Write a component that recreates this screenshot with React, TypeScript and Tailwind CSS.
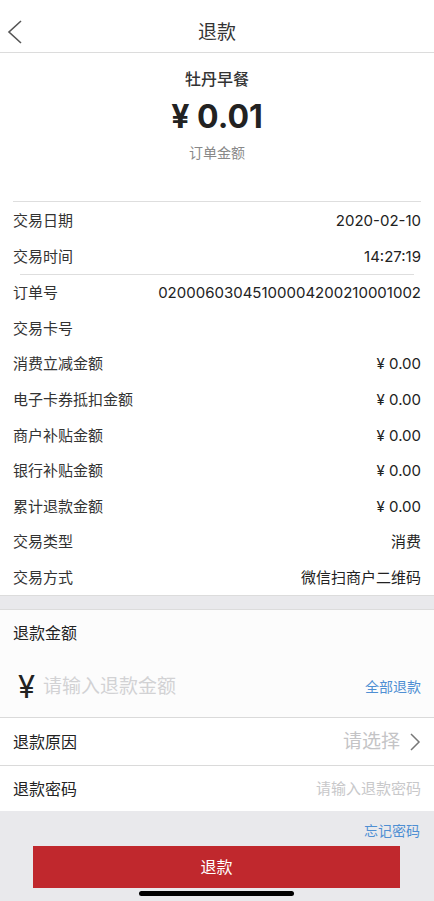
import React from "react";

const font = { fontFamily: 'Inter, "Noto Sans CJK SC", sans-serif' };

function Row({ label, value, h = "h-[35.6px]" }: { label: string; value?: string; h?: string }) {
  return (
    <div className={`flex items-center justify-between px-[13px] ${h} text-[15px] leading-none`}>
      <span className="text-[#333]">{label}</span>
      <span className="text-[#222]">{value ?? ""}</span>
    </div>
  );
}

export default function App() {
  return (
    <div className="relative w-[434px] h-[901px] bg-[#e9e9ec] overflow-hidden" style={font}>
      {/* header */}
      <div className="relative h-[53px] bg-white border-b border-[#dcdcdc] flex items-center justify-center">
        <svg className="absolute left-[6px] top-[18px]" width="20" height="28" viewBox="0 0 20 28">
          <polyline points="15,3 3,14 15,25" fill="none" stroke="#555" strokeWidth="1.6" />
        </svg>
        <span className="text-[19px] text-[#333] mt-[14px]">退款</span>
      </div>

      <div className="bg-white">
        {/* summary */}
        <div className="flex flex-col items-center pt-[14px] pb-[38px]">
          <div className="h-[24px] leading-[24px] text-[16px] text-[#333] font-medium">牡丹早餐</div>
          <div className="mt-[6px] h-[40px] leading-[40px] text-[32px] font-bold text-[#222]">¥ 0.01</div>
          <div className="mt-[6px] h-[20px] leading-[20px] text-[14px] text-[#888]">订单金额</div>
        </div>
        <div className="mx-[13px] h-px bg-[#dedede]" />

        <Row label="交易日期" value="2020-02-10" h="h-[36px]" />
        <Row label="交易时间" value="14:27:19" h="h-[36px]" />
        <div className="mx-[20px] h-px bg-[#dedede]" />
        <Row label="订单号" value="02000603045100004200210001002" />
        <Row label="交易卡号" />
        <Row label="消费立减金额" value="¥ 0.00" />
        <Row label="电子卡券抵扣金额" value="¥ 0.00" />
        <Row label="商户补贴金额" value="¥ 0.00" />
        <Row label="银行补贴金额" value="¥ 0.00" />
        <Row label="累计退款金额" value="¥ 0.00" />
        <Row label="交易类型" value="消费" />
        <Row label="交易方式" value="微信扫商户二维码" />
      </div>

      <div className="h-[15px] border-t border-[#dcdcdc] border-b bg-[#e9e9ec]" />

      <div className="bg-[#fcfcfc]">
        <div className="h-[46px] flex items-center px-[13px] text-[16px] text-[#222]">退款金额</div>
        <div className="h-[61px] flex items-center px-[13px]">
          <span className="text-[31px] text-[#222] leading-none ml-[5px]">¥</span>
          <span className="ml-[8px] text-[19px] text-[#d2d2d4]">请输入退款金额</span>
          <span className="ml-auto text-[14px] text-[#4f8fd3]">全部退款</span>
        </div>
      </div>
      <div className="h-px bg-[#dadada]" />
      <div className="bg-white h-[47px] flex items-center px-[13px]">
        <span className="text-[16px] text-[#222]">退款原因</span>
        <span className="ml-auto text-[19px] text-[#c4c4c6]">请选择</span>
        <svg className="ml-[9px]" width="12" height="20" viewBox="0 0 12 20">
          <polyline points="2,2 10,10 2,18" fill="none" stroke="#777" strokeWidth="1.5" />
        </svg>
      </div>
      <div className="h-px bg-[#dadada]" />
      <div className="bg-white h-[45px] flex items-center px-[13px]">
        <span className="text-[16px] text-[#222]">退款密码</span>
        <span className="ml-auto text-[15px] text-[#c8c8ca]">请输入退款密码</span>
      </div>

      <div className="flex justify-end px-[14px] pt-[9px] h-[35px]">
        <span className="text-[14px] text-[#4f8fd3]">忘记密码</span>
      </div>
      <div className="mx-[33px] w-[367px] h-[42px] bg-[#c0282d] flex items-center justify-center text-white text-[16px]">
        退款
      </div>

      <div className="absolute left-[139px] top-[891px] w-[155px] h-[5px] rounded-full bg-black" />
    </div>
  );
}
